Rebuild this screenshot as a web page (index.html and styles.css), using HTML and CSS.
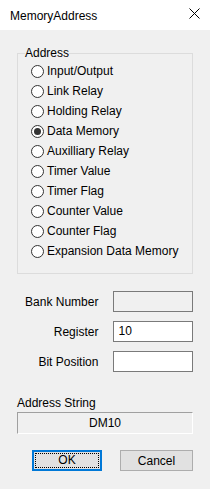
FILE: index.html
```html
<!DOCTYPE html>
<html lang="en">

<head>
    <meta charset="UTF-8">
    <title>MemoryAddress</title>
    <link rel="stylesheet" href="styles.css">
</head>

<body>
    <div class="window">
        <div class="titlebar">
            <span class="title">MemoryAddress</span>
            <svg class="close" width="11" height="11" viewBox="0 0 11 11">
                <path d="M0.5 0.5 L10.5 10.5 M10.5 0.5 L0.5 10.5" stroke="#000" stroke-width="1" fill="none"/>
            </svg>
        </div>

        <div class="content">
            <fieldset class="group">
                <legend>Address</legend>
                <label class="radio"><input type="radio" name="area"> Input/Output</label>
                <label class="radio"><input type="radio" name="area"> Link Relay</label>
                <label class="radio"><input type="radio" name="area"> Holding Relay</label>
                <label class="radio"><input type="radio" name="area" checked> Data Memory</label>
                <label class="radio"><input type="radio" name="area"> Auxilliary Relay</label>
                <label class="radio"><input type="radio" name="area"> Timer Value</label>
                <label class="radio"><input type="radio" name="area"> Timer Flag</label>
                <label class="radio"><input type="radio" name="area"> Counter Value</label>
                <label class="radio"><input type="radio" name="area"> Counter Flag</label>
                <label class="radio"><input type="radio" name="area"> Expansion Data Memory</label>
            </fieldset>

            <div class="fields">
                <div class="field">
                    <label>Bank Number</label>
                    <div class="textbox disabled"></div>
                </div>
                <div class="field">
                    <label>Register</label>
                    <div class="textbox">10</div>
                </div>
                <div class="field">
                    <label>Bit Position</label>
                    <div class="textbox"></div>
                </div>
            </div>

            <div class="result-label">Address String</div>
            <div class="result">DM10</div>

            <div class="buttons">
                <button class="btn default"><span>OK</span></button>
                <button class="btn cancel">Cancel</button>
            </div>
        </div>
    </div>
</body>

</html>
```

FILE: styles.css
```css
html, body {
    margin: 0;
    padding: 0;
}

body {
    font-family: "Liberation Sans", Arial, sans-serif;
    font-size: 12px;
    color: #000;
    background-color: #f0f0f0;
    width: 210px;
    height: 489px;
    overflow: hidden;
}

.titlebar {
    height: 30px;
    background-color: #fff;
    display: flex;
    align-items: center;
    justify-content: space-between;
    padding: 0 10px 0 10px;
}

.title {
    font-size: 12px;
    margin-top: 1px;
}

.close {
    margin-top: -4px;
}

.content {
    padding: 16px 17px 0 17px;
}

.group {
    margin: 0;
    border: 1px solid #dcdcdc;
    padding: 1px 0 12px 7px;
}

.group legend {
    margin-left: 0;
    padding: 0;
    line-height: 14px;
    height: 14px;
}

.radio {
    display: flex;
    align-items: center;
    height: 20px;
    gap: 3px;
    margin-left: 6px;
}

.radio input {
    appearance: none;
    -webkit-appearance: none;
    margin: 0;
    width: 13px;
    height: 13px;
    border: 1px solid #333;
    border-radius: 50%;
    background-color: #fff;
    box-sizing: border-box;
    display: flex;
    align-items: center;
    justify-content: center;
}

.radio input:checked::after {
    content: "";
    width: 7px;
    height: 7px;
    border-radius: 50%;
    background-color: #333;
}

.fields {
    margin-top: 17px;
    display: flex;
    flex-direction: column;
    gap: 9px;
}

.field {
    display: flex;
    align-items: center;
    gap: 15px;
}

.field label {
    width: 82px;
    text-align: right;
}

.textbox {
    width: 80px;
    height: 21px;
    box-sizing: border-box;
    border: 1px solid #7a7a7a;
    background-color: #fff;
    padding: 0 0 0 4px;
    line-height: 19px;
}

.textbox.disabled {
    background-color: #f0f0f0;
}

.result-label {
    margin-top: 24px;
    line-height: 14px;
}

.result {
    margin-top: 2px;
    height: 22px;
    box-sizing: border-box;
    border: 1px solid #fff;
    border-top-color: #a0a0a0;
    border-left-color: #a0a0a0;
    text-align: center;
    line-height: 20px;
}

.buttons {
    margin-top: 16px;
    display: flex;
    padding-left: 15px;
    gap: 18px;
}

.btn {
    font-family: inherit;
    font-size: 12px;
    height: 21px;
    box-sizing: border-box;
    background-color: #e1e1e1;
    border: 1px solid #adadad;
    padding: 0;
    margin: 0;
    color: #000;
}

.btn.default {
    width: 71px;
    border: 2px solid #0078d7;
    padding: 1px;
}

.btn.default span {
    display: block;
    height: 100%;
    box-sizing: border-box;
    border: 1px dotted #000;
    line-height: 13px;
}

.btn.cancel {
    width: 74px;
}
```
